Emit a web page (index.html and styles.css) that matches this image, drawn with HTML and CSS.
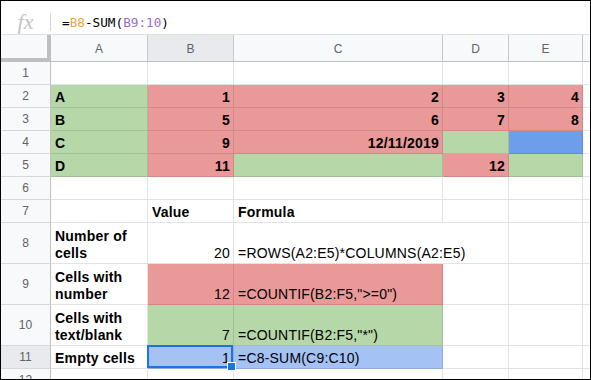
FILE: index.html
```html
<!DOCTYPE html>
<html lang="en">
<head>
<meta charset="UTF-8" />
<title>Sheet - count cells</title>
<link rel="stylesheet" href="styles.css">
</head>
<body>
<div class="sheet">
  <div class="fbar">
    <span class="fx">fx</span>
    <div class="formula">=<span class="ref1">B8</span>-SUM(<span class="ref2">B9:10</span>)</div>
  </div>

  <div class="grid">
    <div class="corner"></div>
    <div class="h">A</div><div class="h hsel">B</div><div class="h">C</div><div class="h">D</div><div class="h">E</div><div class="h"></div>

    <div class="r">1</div>
    <div class="c"></div><div class="c"></div><div class="c"></div><div class="c"></div><div class="c"></div><div class="c"></div>

    <div class="r">2</div>
    <div class="c green b">A</div><div class="c red b num">1</div><div class="c red b num">2</div><div class="c red b num">3</div><div class="c red b num">4</div><div class="c"></div>

    <div class="r">3</div>
    <div class="c green b">B</div><div class="c red b num">5</div><div class="c red b num">6</div><div class="c red b num">7</div><div class="c red b num">8</div><div class="c"></div>

    <div class="r">4</div>
    <div class="c green b">C</div><div class="c red b num">9</div><div class="c red b num">12/11/2019</div><div class="c green"></div><div class="c blue"></div><div class="c"></div>

    <div class="r">5</div>
    <div class="c green b">D</div><div class="c red b num">11</div><div class="c green"></div><div class="c red b num">12</div><div class="c green"></div><div class="c"></div>

    <div class="r">6</div>
    <div class="c"></div><div class="c"></div><div class="c"></div><div class="c"></div><div class="c"></div><div class="c"></div>

    <div class="r">7</div>
    <div class="c"></div><div class="c b">Value</div><div class="c b">Formula</div><div class="c"></div><div class="c"></div><div class="c"></div>

    <div class="r">8</div>
    <div class="c b">Number of<br>cells</div><div class="c num">20</div><div class="c ovf">=ROWS(A2:E5)*COLUMNS(A2:E5)</div><div class="c"></div><div class="c"></div><div class="c"></div>

    <div class="r">9</div>
    <div class="c b">Cells with<br>number</div><div class="c red num">12</div><div class="c red">=COUNTIF(B2:F5,"&gt;=0")</div><div class="c"></div><div class="c"></div><div class="c"></div>

    <div class="r">10</div>
    <div class="c b">Cells with<br>text/blank</div><div class="c green num">7</div><div class="c green">=COUNTIF(B2:F5,"*")</div><div class="c"></div><div class="c"></div><div class="c"></div>

    <div class="r rsel">11</div>
    <div class="c b">Empty cells</div><div class="c light num active">1</div><div class="c light">=C8-SUM(C9:C10)</div><div class="c"></div><div class="c"></div><div class="c"></div>

    <div class="r">12</div>
    <div class="c"></div><div class="c"></div><div class="c"></div><div class="c"></div><div class="c"></div><div class="c"></div>
  </div>
</div>
</body>
</html>
```

FILE: styles.css
```css
* {
  box-sizing: border-box;
}
body {
  margin: 0;
  background: #fff;
}
.sheet {
  width: 591px;
  height: 380px;
  border: 1px solid #000;
  overflow: hidden;
  font-family: "Liberation Sans", Arial, sans-serif;
}

/* formula bar */
.fbar {
  height: 34px;
  display: flex;
  align-items: flex-start;
  padding-top: 12px;
  border-bottom: 1px solid #e0e0e0;
}
.fx {
  width: 49px;
  text-align: center;
  font-family: "Liberation Serif", serif;
  font-style: italic;
  font-size: 22px;
  line-height: 18px;
  color: #c4c4c4;
}
.formula {
  height: 18px;
  line-height: 20px;
  border-left: 1px solid #d5d5d5;
  padding-left: 11px;
  font-family: "DejaVu Sans Mono", "Liberation Mono", monospace;
  font-size: 12.7px;
  color: #000;
}
.ref1 { color: #f6a23a; }
.ref2 { color: #9a6cc5; }

/* grid */
.grid {
  display: grid;
  grid-template-columns: 50px 97px 86px 209px 66px 74px 1fr;
  grid-template-rows: 27px repeat(7, 23px) 41px 41px 41px 23px 23px;
}
.corner {
  background: #f8f9fa;
  border-right: 4px solid #bfbfbf;
  border-bottom: 4px solid #bfbfbf;
}
.h {
  background: #f8f9fa;
  border-right: 1px solid #c8c8c8;
  border-bottom: 1px solid #c0c0c0;
  color: #5f6368;
  font-size: 12px;
  display: flex;
  align-items: center;
  justify-content: center;
  padding-top: 2px;
}
.r {
  background: #f8f9fa;
  border-right: 1px solid #c0c0c0;
  border-bottom: 1px solid #d8d8d8;
  color: #5f6368;
  font-size: 12px;
  display: flex;
  align-items: center;
  justify-content: center;
}
.hsel, .rsel {
  background: #e8eaed;
}
.c {
  position: relative;
  border-right: 1px solid rgba(0, 0, 0, 0.11);
  border-bottom: 1px solid rgba(0, 0, 0, 0.11);
  font-size: 14px;
  line-height: 16.5px;
  letter-spacing: 0.2px;
  color: #000;
  padding: 0 3px 2px 4px;
  display: flex;
  align-items: flex-end;
  white-space: nowrap;
}
.b { font-weight: bold; }
.num { justify-content: flex-end; }
.ovf { border-right-color: transparent; }

.green { background: #b6d7a8; }
.red { background: #ea9999; }
.blue { background: #6d9eeb; }
.light { background: #a4c2f4; }

/* selected cell outline and fill handle */
.active::after {
  content: "";
  position: absolute;
  left: -1px;
  top: -1px;
  right: 0;
  bottom: 0;
  border: 2px solid #1a73e8;
}
.active::before {
  content: "";
  position: absolute;
  right: -3px;
  bottom: -3px;
  width: 7px;
  height: 7px;
  background: #1a73e8;
  border: 1px solid #fff;
  z-index: 1;
}
```
